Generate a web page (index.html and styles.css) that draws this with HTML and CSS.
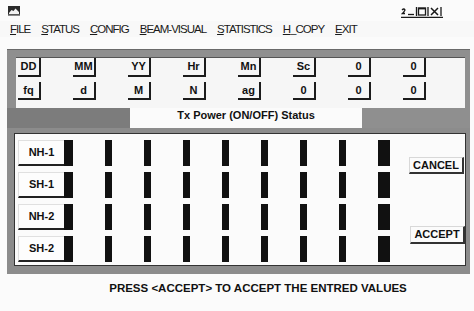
FILE: index.html
```html
<!DOCTYPE html>
<html>
<head>
<meta charset="utf-8">
<link rel="stylesheet" href="styles.css">
</head>
<body>
<div class="window">
  <div class="titlebar">
    <svg class="app-icon" width="12" height="10" viewBox="0 0 12 10">
      <rect x="0" y="0" width="12" height="10" fill="#2a2a2a"/>
      <path d="M1 7 L3.5 4 L5.5 5 L7.5 2.5 L11 6 L11 8 L1 8 Z" fill="#f2f2f2"/>
      <rect x="0" y="8.5" width="12" height="1.5" fill="#888"/>
    </svg>
    <svg class="win-ctrls" width="44" height="12" viewBox="0 0 44 12">
      <g fill="none" stroke="#1a1a1a" stroke-width="1.3">
        <path d="M1 4 Q3 2 4 4 Q3 6 1.5 7.5 L4 7.5"/>
        <path d="M7 8.5 H13"/>
        <path d="M15.5 1 V10"/>
        <rect x="17.5" y="2" width="7" height="7"/>
        <path d="M17.5 2.6 H24.5" stroke-width="1.6"/>
        <path d="M27 1 V10"/>
        <path d="M30 2 L37 9 M37 2 L30 9" stroke-width="1.5"/>
        <path d="M40 1 V10"/>
        <path d="M0 11.3 H42"/>
      </g>
    </svg>
  </div>

  <nav class="menubar">
    <span class="menu-item"><u>F</u>ILE</span>
    <span class="menu-item"><u>S</u>TATUS</span>
    <span class="menu-item"><u>C</u>ONFIG</span>
    <span class="menu-item"><u>B</u>EAM-VISUAL</span>
    <span class="menu-item"><u>S</u>TATISTICS</span>
    <span class="menu-item"><u>H</u>_COPY</span>
    <span class="menu-item"><u>E</u>XIT</span>
  </nav>

  <section class="top-panel">
    <div class="field-box">
      <div class="field-row">
        <div class="fbtn">DD</div>
        <div class="fbtn">MM</div>
        <div class="fbtn">YY</div>
        <div class="fbtn">Hr</div>
        <div class="fbtn">Mn</div>
        <div class="fbtn">Sc</div>
        <div class="fbtn">0</div>
        <div class="fbtn">0</div>
      </div>
      <div class="field-row">
        <div class="fbtn">fq</div>
        <div class="fbtn">d</div>
        <div class="fbtn">M</div>
        <div class="fbtn">N</div>
        <div class="fbtn">ag</div>
        <div class="fbtn">0</div>
        <div class="fbtn">0</div>
        <div class="fbtn">0</div>
      </div>
    </div>
    <div class="status-row">
      <div class="status-spacer"></div>
      <div class="status-box">Tx Power (ON/OFF) Status</div>
    </div>
  </section>

  <section class="beam-panel">
    <div class="beam-inner">
      <div class="beam-rows">
        <div class="beam-row">
          <div class="beam-btn">NH-1</div>
          <div class="bars">
            <span class="bar first"></span><span class="bar"></span><span class="bar"></span><span class="bar"></span><span class="bar"></span><span class="bar"></span><span class="bar"></span><span class="bar"></span><span class="bar last"></span>
          </div>
        </div>
        <div class="beam-row">
          <div class="beam-btn">SH-1</div>
          <div class="bars">
            <span class="bar first"></span><span class="bar"></span><span class="bar"></span><span class="bar"></span><span class="bar"></span><span class="bar"></span><span class="bar"></span><span class="bar"></span><span class="bar last"></span>
          </div>
        </div>
        <div class="beam-row">
          <div class="beam-btn">NH-2</div>
          <div class="bars">
            <span class="bar first"></span><span class="bar"></span><span class="bar"></span><span class="bar"></span><span class="bar"></span><span class="bar"></span><span class="bar"></span><span class="bar"></span><span class="bar last"></span>
          </div>
        </div>
        <div class="beam-row">
          <div class="beam-btn">SH-2</div>
          <div class="bars">
            <span class="bar first"></span><span class="bar"></span><span class="bar"></span><span class="bar"></span><span class="bar"></span><span class="bar"></span><span class="bar"></span><span class="bar"></span><span class="bar last"></span>
          </div>
        </div>
      </div>
      <div class="actions">
        <div class="act-btn">CANCEL</div>
        <div class="act-btn accept">ACCEPT</div>
      </div>
    </div>
  </section>

  <p class="hint">PRESS &lt;ACCEPT&gt; TO ACCEPT THE ENTRED VALUES</p>
</div>
</body>
</html>
```

FILE: styles.css
```css
* { box-sizing: border-box; }

html, body {
  margin: 0;
  padding: 0;
  background: #fbfbfb;
}

body {
  width: 474px;
  height: 311px;
  overflow: hidden;
  font-family: "Liberation Sans", Arial, sans-serif;
  color: #111;
}

.window {
  width: 474px;
}

.titlebar {
  height: 21px;
  display: flex;
  align-items: flex-start;
  justify-content: space-between;
  padding: 6px 29px 0 8px;
}

.menubar {
  height: 16px;
  display: flex;
  gap: 11px;
  padding-left: 10px;
  font-family: "Liberation Sans", Arial, sans-serif;
  font-size: 11.5px;
  letter-spacing: -1px;
  line-height: 16px;
  color: #1a1a1a;
  background: #f8f8f8;
}

.menu-item u {
  text-decoration-thickness: 1px;
  text-underline-offset: 1px;
}

.top-panel {
  margin: 12px 4px 0 7px;
  background: #8f8f8f;
  padding: 7px 5px 0 9px;
  border-top: 1px solid #6a6a6a;
}

.field-box {
  height: 51px;
  background: #f6f6f6;
  border-top: 1px solid #555;
  padding: 0 0 0 2px;
  display: flex;
  flex-direction: column;
  gap: 5px;
}

.field-row {
  display: flex;
  gap: 32px;
}

.fbtn {
  width: 23px;
  height: 19px;
  border-right: 2px solid #1c1c1c;
  border-bottom: 2px solid #1c1c1c;
  font-size: 11px;
  font-weight: bold;
  line-height: 17px;
  text-align: center;
}

.field-row + .field-row .fbtn {
  height: 18px;
  line-height: 16px;
}

.status-row {
  display: flex;
  height: 20px;
  margin-left: -9px;
}

.status-spacer {
  width: 123px;
  background: #7c7c7c;
}

.status-box {
  width: 232px;
  background: #fbfbfb;
  font-size: 11px;
  font-weight: bold;
  text-align: center;
  line-height: 12px;
  padding-top: 1px;
}

.beam-panel {
  margin: 0 4px 0 7px;
  background: #8c8c8c;
  padding: 5px 4px 8px 7px;
}

.beam-inner {
  height: 133px;
  background: #fbfbfb;
  border: 1px solid #333;
  display: flex;
}

.beam-rows {
  padding: 6px 0 0 3px;
  display: flex;
  flex-direction: column;
  gap: 6px;
}

.beam-row {
  display: flex;
  height: 26px;
}

.beam-btn {
  width: 46px;
  height: 26px;
  border-top: 1px solid #e0e0e0;
  border-left: 1px solid #e0e0e0;
  border-bottom: 2px solid #222;
  font-size: 11px;
  font-weight: bold;
  line-height: 23px;
  text-align: center;
  background: #fdfdfd;
}

.bars {
  display: flex;
  gap: 32px;
}

.bar {
  width: 7px;
  height: 26px;
  background: #111;
}

.bar.first { width: 9px; }
.bar.last { width: 12px; }

.actions {
  margin-left: auto;
  padding-top: 23px;
  display: flex;
  flex-direction: column;
  gap: 52px;
  width: 56px;
}

.act-btn {
  width: 55px;
  height: 17px;
  border-top: 1px solid #d8d8d8;
  border-left: 1px solid #d8d8d8;
  border-right: 2px solid #333;
  border-bottom: 2px solid #333;
  font-size: 11px;
  font-weight: bold;
  line-height: 14px;
  text-align: center;
}

.act-btn.accept {
  height: 18px;
  line-height: 15px;
  margin-left: 1px;
}

.hint {
  margin: 8px 0 0;
  padding-left: 42px;
  text-align: center;
  font-size: 11.5px;
  font-weight: bold;
  line-height: 13px;
}
```
